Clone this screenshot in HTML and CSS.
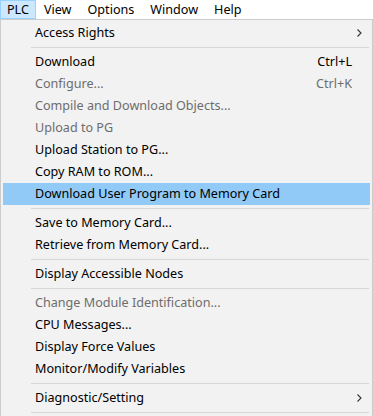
FILE: index.html
```html
<!DOCTYPE html>
<html lang="en">
<head>
  <meta charset="UTF-8" />
  <title>PLC Menu</title>
  <link rel="stylesheet" href="styles.css">
</head>
<body>
  <!-- menu bar -->
  <nav class="menubar">
    <span class="top open">PLC</span>
    <span class="top">View</span>
    <span class="top">Options</span>
    <span class="top">Window</span>
    <span class="top">Help</span>
  </nav>

  <!-- dropdown -->
  <ul class="menu">
    <li class="item sub">Access Rights
      <svg class="arrow" width="5" height="8" viewBox="0 0 5 8"><polyline points="0.5,0.5 4,4 0.5,7.5" fill="none" stroke="#333" stroke-width="1.1"/></svg>
    </li>
    <li class="sep"></li>
    <li class="item">Download <span class="key">Ctrl+L</span></li>
    <li class="item off">Configure... <span class="key">Ctrl+K</span></li>
    <li class="item off">Compile and Download Objects...</li>
    <li class="item off">Upload to PG</li>
    <li class="item">Upload Station to PG...</li>
    <li class="item">Copy RAM to ROM...</li>
    <li class="item hot">Download User Program to Memory Card</li>
    <li class="sep"></li>
    <li class="item">Save to Memory Card...</li>
    <li class="item">Retrieve from Memory Card...</li>
    <li class="sep"></li>
    <li class="item">Display Accessible Nodes</li>
    <li class="sep"></li>
    <li class="item off">Change Module Identification...</li>
    <li class="item">CPU Messages...</li>
    <li class="item">Display Force Values</li>
    <li class="item">Monitor/Modify Variables</li>
    <li class="sep"></li>
    <li class="item sub">Diagnostic/Setting
      <svg class="arrow" width="5" height="8" viewBox="0 0 5 8"><polyline points="0.5,0.5 4,4 0.5,7.5" fill="none" stroke="#333" stroke-width="1.1"/></svg>
    </li>
    <li class="sep"></li>
  </ul>
</body>
</html>
```

FILE: styles.css
```css
*{box-sizing:border-box;margin:0;padding:0}

html,body{height:100%;overflow:hidden}
body{background:#fff;color:#000;font-family:"Noto Sans","Open Sans",sans-serif;font-size:12.6px}

/* ---------- MENU BAR ---------- */
.menubar{display:flex;height:19px;align-items:stretch}
.top{padding:0 7px 0 7px;line-height:18px;height:19px;border:1px solid transparent}
.top.open{background:#cce8ff;border-color:#99d1ff;padding:0 6px}

/* ---------- DROPDOWN ---------- */
.menu{list-style:none;width:373px;background:#f2f2f2;border:1px solid #ccc;padding:2px 2px 8px}
.item{display:flex;align-items:center;height:22px;line-height:22px;padding:0 18px 0 32px;white-space:nowrap}
.item.off{color:#6d6d6d}
.item.hot{background:#91c9f7}
.key{margin-left:auto}
.sub .arrow{margin-left:auto;margin-right:-10px}
.sep{height:7px;padding-top:3px;margin-left:28px;margin-right:1px}
.sep::before{content:"";display:block;height:1px;background:#d7d7d7}
```
